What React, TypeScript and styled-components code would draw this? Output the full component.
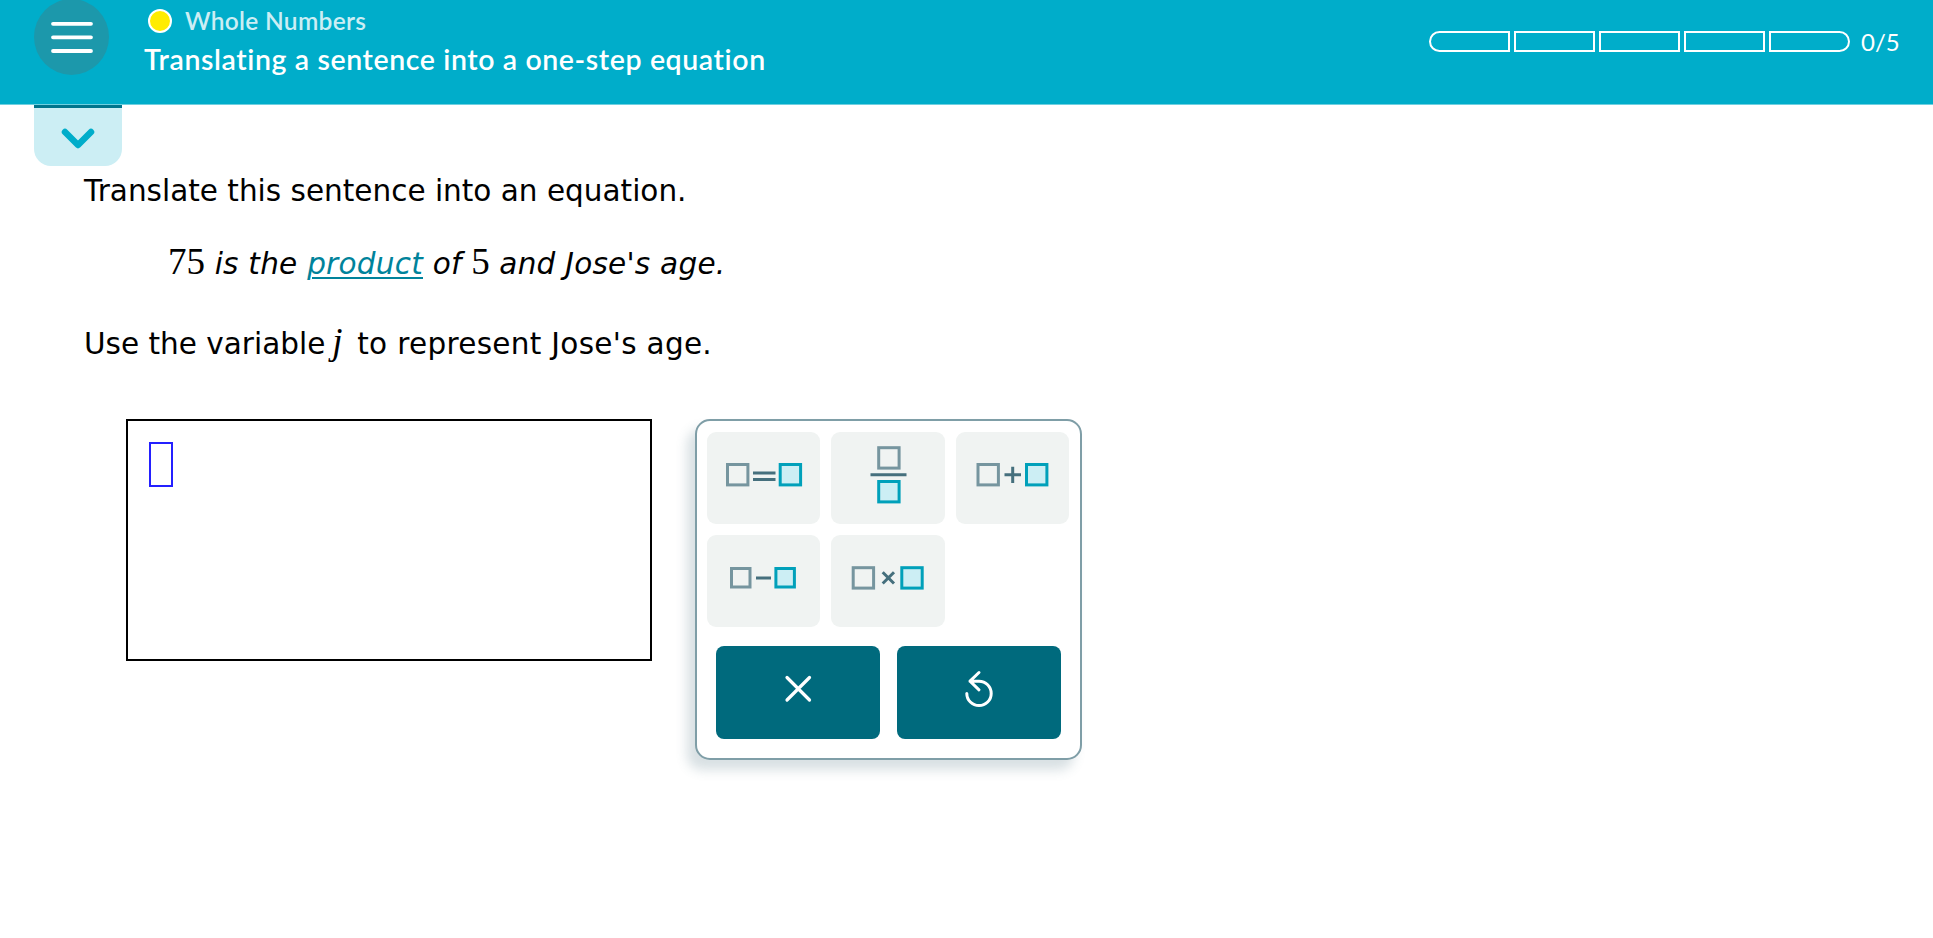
import React from "react";
import styled, { createGlobalStyle } from "styled-components";

const GlobalStyle = createGlobalStyle`
  body {
    margin: 0;
    background: #fff;
    overflow: hidden;
  }
  * {
    box-sizing: border-box;
  }
`;

const Page = styled.div`
  height: 938px;
  font-family: "DejaVu Sans", Verdana, sans-serif;
  color: #000;
`;

const Header = styled.header`
  display: flex;
  align-items: flex-start;
  height: 105px;
  padding: 0 35px 0 34px;
  border-bottom: 1px solid #6fd0e0;
  background: #00adca;
  background-clip: padding-box;
  font-family: Lato, sans-serif;
  font-variant-ligatures: none;
`;

const MenuButton = styled.button`
  display: flex;
  align-items: center;
  justify-content: center;
  width: 75px;
  height: 76px;
  margin-top: -1px;
  padding: 0;
  border: 0;
  border-radius: 50%;
  background: #1c98ab;
`;

const Titles = styled.div`
  display: flex;
  flex-direction: column;
  flex: 1;
  padding-left: 35px;
`;

const Topic = styled.div`
  display: flex;
  align-items: center;
  gap: 13px;
  height: 41px;
  padding-left: 4px;
  color: #cceef4;
  font-size: 24.5px;
  font-weight: 600;
  letter-spacing: 0.3px;
  white-space: nowrap;
`;

const Dot = styled.span`
  width: 24px;
  height: 24px;
  border: 2px solid #fff;
  border-radius: 50%;
  background: #ffec00;
`;

const Title = styled.h1`
  margin: -1px 0 0;
  color: #fff;
  font-size: 28.5px;
  font-weight: 600;
  letter-spacing: 0.6px;
  line-height: 38px;
  white-space: nowrap;
`;

const Progress = styled.div`
  display: flex;
  align-items: center;
  gap: 4px;
  margin-top: 31px;
  height: 21px;
`;

const Segment = styled.span<{ $end?: "left" | "right" }>`
  width: 81px;
  height: 21px;
  border: 2px solid #fff;
  border-radius: ${props =>
    props.$end === "left"
      ? "11px 0 0 11px"
      : props.$end === "right"
      ? "0 11px 11px 0"
      : "0"};
`;

const Score = styled.span`
  width: 37px;
  margin-left: 7px;
  color: #fff;
  font-size: 24px;
  line-height: 21px;
`;

const Tab = styled.button`
  display: flex;
  justify-content: center;
  width: 88px;
  height: 61px;
  margin: 0 0 0 34px;
  padding: 20px 0 0;
  border: 0;
  border-top: 3px solid #00758c;
  border-radius: 0 0 17px 17px;
  background: #cceef4;
`;

const Problem = styled.main`
  padding: 5px 0 0 84px;
`;

const Line = styled.p<{ $gap?: number }>`
  margin: 0 0 ${props => props.$gap || 0}px;
  font-size: 29.5px;
  line-height: 40px;
  white-space: nowrap;
`;

const Sentence = styled(Line)`
  padding-left: 84px;
  font-style: italic;
  letter-spacing: 0.25px;
`;

const Num = styled.span`
  font-family: "Liberation Serif", serif;
  font-size: 37px;
  font-style: normal;
  letter-spacing: 0;
  line-height: 0;
`;

const Variable = styled(Num)`
  margin: 0 5px 0 7px;
  font-style: italic;
`;

const Spaced = styled.span`
  letter-spacing: 0.3px;
`;

const Term = styled.a`
  color: #00839b;
  text-decoration: underline;
  text-decoration-thickness: 2px;
  text-underline-offset: 3px;
`;

const Workspace = styled.div`
  display: flex;
  align-items: flex-start;
  gap: 43px;
  padding-left: 42px;
`;

const Answer = styled.div`
  width: 526px;
  height: 242px;
  padding: 21px;
  border: 2px solid #000;
`;

const Caret = styled.div`
  width: 24px;
  height: 45px;
  border: 2px solid #2420ff;
`;

const Keypad = styled.div`
  width: 387px;
  height: 341px;
  padding: 11px 10px;
  border: 2px solid #7f9ea7;
  border-radius: 15px;
  background: #fff;
  box-shadow: -8px 10px 12px rgba(60, 100, 115, 0.2);
`;

const Keys = styled.div`
  display: grid;
  grid-template-columns: repeat(3, 113.3px);
  grid-auto-rows: 92px;
  gap: 11px;
`;

const Key = styled.button`
  display: flex;
  padding: 0;
  border: 0;
  border-radius: 9px;
  background: #f0f3f2;
`;

const Actions = styled.div`
  display: flex;
  gap: 17px;
  padding: 19px 0 0 9px;
`;

const Action = styled.button`
  width: 164px;
  height: 93px;
  padding: 0;
  border: 0;
  border-radius: 8px;
  background: #006a7d;
`;

type BoxProps = {
  x: number;
  y: number;
  size?: number;
  filled?: boolean;
};

// x and y are the outer corner of the 3px outline
const Box: React.FC<BoxProps> = ({ x, y, size = 23.4, filled }: BoxProps) => (
  <rect
    x={x + 1.5}
    y={y + 1.5}
    width={size - 3}
    height={size - 3}
    fill={filled ? "#cceef4" : "none"}
    stroke={filled ? "#00a0ba" : "#76959f"}
    strokeWidth="3"
  />
);

const OPERATORS = [
  {
    name: "equals",
    boxes: [{ x: 19, y: 31 }, { x: 71.7, y: 31 }],
    path: "M46 41H68.5M46 47.5H68.5"
  },
  {
    name: "fraction",
    boxes: [{ x: 46.2, y: 14.2 }, { x: 46.2, y: 48 }],
    path: "M39.5 42.8H75.5"
  },
  {
    name: "plus",
    boxes: [{ x: 20.5, y: 31 }, { x: 69, y: 31 }],
    path: "M48.5 42.8H65M56.7 34.8V51"
  },
  {
    name: "minus",
    boxes: [{ x: 23, y: 32, size: 21.5 }, { x: 67.4, y: 32, size: 21.5 }],
    path: "M49 43H64"
  },
  {
    name: "times",
    boxes: [{ x: 20.7, y: 31.2 }, { x: 69.3, y: 31.2 }],
    path: "M51.7 37.2L63 48.5M63 37.2L51.7 48.5"
  }
];

const App: React.FC = () => {
  return (
    <Page>
      <GlobalStyle />
      <Header>
        <MenuButton aria-label="Menu">
          <svg width="42" height="32" viewBox="0 0 42 32">
            <path
              d="M2 2.8H40M2 16.3H40M2 30H40"
              stroke="#fff"
              strokeWidth="3.8"
              strokeLinecap="round"
            />
          </svg>
        </MenuButton>
        <Titles>
          <Topic>
            <Dot />
            Whole Numbers
          </Topic>
          <Title>Translating a sentence into a one-step equation</Title>
        </Titles>
        <Progress>
          <Segment $end="left" />
          <Segment />
          <Segment />
          <Segment />
          <Segment $end="right" />
          <Score>0/5</Score>
        </Progress>
      </Header>
      <Tab aria-label="Expand">
        <svg width="34" height="22" viewBox="0 0 34 22">
          <path
            d="M4 4L17 17L30 4"
            fill="none"
            stroke="#00adca"
            strokeWidth="6.5"
            strokeLinecap="round"
            strokeLinejoin="round"
          />
        </svg>
      </Tab>
      <Problem>
        <Line $gap={33}>Translate this sentence into an equation.</Line>
        <Sentence $gap={39.5}>
          <Num>75</Num> is the <Term>product</Term> of <Num>5</Num> and Jose's
          age.
        </Sentence>
        <Line $gap={55.5}>
          Use the variable
          <Variable>j</Variable>
          <Spaced> to represent Jose's age.</Spaced>
        </Line>
        <Workspace>
          <Answer>
            <Caret />
          </Answer>
          <Keypad>
            <Keys>
              {OPERATORS.map(({ name, boxes, path }) => (
                <Key key={name} aria-label={name}>
                  <svg width="113" height="92" viewBox="0 0 113 92">
                    <Box {...boxes[0]} />
                    <path d={path} stroke="#456f7d" strokeWidth="3" />
                    <Box {...boxes[1]} filled />
                  </svg>
                </Key>
              ))}
            </Keys>
            <Actions>
              <Action aria-label="Clear">
                <svg width="164" height="93" viewBox="0 0 164 93">
                  <path
                    d="M71 31.5L93.5 54M93.5 31.5L71 54"
                    stroke="#fff"
                    strokeWidth="3.2"
                    strokeLinecap="round"
                  />
                </svg>
              </Action>
              <Action aria-label="Undo">
                <svg width="164" height="93" viewBox="0 0 164 93">
                  <path
                    d="M82 26.5L73 35.2L82 43.8M73 35.2H82A12.2 12.2 0 1 1 69.8 47.4"
                    fill="none"
                    stroke="#fff"
                    strokeWidth="3"
                    strokeLinecap="round"
                    strokeLinejoin="round"
                  />
                </svg>
              </Action>
            </Actions>
          </Keypad>
        </Workspace>
      </Problem>
    </Page>
  );
};

export default App;
